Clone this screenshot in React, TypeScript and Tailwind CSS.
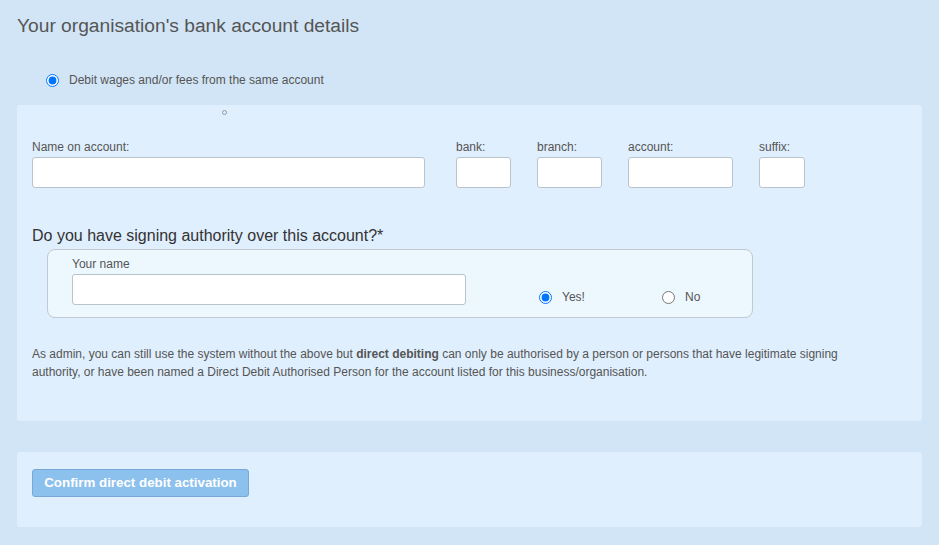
export default function App() {
  const fields = [
    { label: 'bank:', w: 'w-[55px]' },
    { label: 'branch:', w: 'w-[65px]' },
    { label: 'account:', w: 'w-[105px]' },
    { label: 'suffix:', w: 'w-[46px]' },
  ]

  return (
    <div className="min-h-[545px] bg-[#d2e5f6] pt-[14px] pb-[19px] font-['Liberation_Sans',Arial,sans-serif] text-[#555]">
      <h1 className="pl-[17px] text-[19.2px] leading-[24px] text-[#555]">
        Your organisation's bank account details
      </h1>

      <label className="mt-[34px] flex h-[16px] items-center gap-[10px] pl-[46px] text-[12px]">
        <input type="radio" defaultChecked className="m-0 h-[13px] w-[13px]" />
        Debit wages and/or fees from the same account
      </label>

      {/* Bank account panel */}
      <div className="mx-[17px] mt-[17px] rounded-[3px] bg-[#e0effd] px-[15px] pb-[40px]">
        <div className="ml-[190px] pt-[5px]">
          <div className="h-[5px] w-[5px] rounded-full border border-[#999]" />
        </div>

        <div className="mt-[25px] flex">
          <div className="mr-[31px]">
            <div className="mb-[3px] text-[12px] leading-[14px]">Name on account:</div>
            <input className="h-[31px] w-[393px] rounded-[3px] border border-[#b9c3cc] bg-white" />
          </div>
          {fields.map(f => (
            <div key={f.label} className="mr-[26px]">
              <div className="mb-[3px] text-[12px] leading-[14px]">{f.label}</div>
              <input className={`h-[31px] ${f.w} rounded-[3px] border border-[#b9c3cc] bg-white`} />
            </div>
          ))}
        </div>

        <h2 className="mt-[38px] text-[16px] leading-[20px] text-[#333]">
          Do you have signing authority over this account?*
        </h2>

        <div className="ml-[15px] mt-[3px] flex h-[69px] w-[706px] rounded-[8px] border border-[#c2c9d0] bg-[#edf7fe] pl-[24px] pt-[7px]">
          <div>
            <div className="mb-[3px] text-[12px] leading-[14px]">Your name</div>
            <input className="h-[31px] w-[394px] rounded-[3px] border border-[#b9c3cc] bg-white" />
          </div>
          <div className="ml-[73px] mt-[32px] flex h-[16px] text-[12px]">
            <label className="flex w-[123px] items-center gap-[10px]">
              <input type="radio" name="auth" defaultChecked className="m-0 h-[13px] w-[13px]" />
              Yes!
            </label>
            <label className="flex items-center gap-[10px]">
              <input type="radio" name="auth" className="m-0 h-[13px] w-[13px]" />
              No
            </label>
          </div>
        </div>

        <p className="mt-[27px] w-[840px] text-[12px] leading-[18px]">
          As admin, you can still use the system without the above but <b>direct debiting</b> can only be
          authorised by a person or persons that have legitimate signing authority, or have been named a
          Direct Debit Authorised Person for the account listed for this business/organisation.
        </p>
      </div>

      {/* Confirm panel */}
      <div className="mx-[17px] mt-[31px] rounded-[3px] bg-[#e0effd] px-[15px] pb-[30px] pt-[17px]">
        <button className="h-[28px] w-[217px] rounded-[3px] border border-[#76a9d9] bg-[#8cc0ed] text-[13.333px] font-bold text-white">
          Confirm direct debit activation
        </button>
      </div>
    </div>
  )
}
